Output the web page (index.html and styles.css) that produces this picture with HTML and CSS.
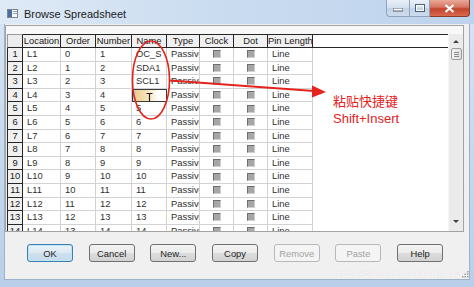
FILE: index.html
```html
<!DOCTYPE html>
<html lang="en">
<head>
  <meta charset="UTF-8">
  <meta name="viewport" content="width=device-width, initial-scale=1.0">
  <title>Browse Spreadsheet</title>
  <link rel="stylesheet" href="styles.css">
</head>
<body>
  <div class="window">
    <!-- TITLE BAR -->
    <div class="titlebar">
      <svg class="app-icon" width="11" height="9" viewBox="0 0 11 9">
        <rect x="0.5" y="0.5" width="10" height="8" fill="#f4f6f8" stroke="#7c8796"/>
        <rect x="1" y="1" width="4" height="7" fill="#4a6f9c"/>
        <rect x="6" y="2" width="4" height="1" fill="#9aa6b4"/>
        <rect x="6" y="4" width="4" height="1" fill="#9aa6b4"/>
      </svg>
      <span class="title">Browse Spreadsheet</span>
      <div class="controls">
        <span class="ctl min"><svg width="10" height="4"><rect x="0" y="0" width="10" height="3" fill="#fff" stroke="#4d5f77" stroke-width="1"/></svg></span>
        <span class="ctl max"><svg width="10" height="8"><rect x="0.5" y="0.5" width="9" height="7" fill="none" stroke="#4d5f77"/><rect x="1.5" y="1.5" width="7" height="5" fill="none" stroke="#fff"/></svg></span>
        <span class="ctl close"><svg width="11" height="9" viewBox="0 0 11 9"><path d="M1.5 1 L9.5 8 M9.5 1 L1.5 8" stroke="#fff" stroke-width="2.2"/></svg></span>
      </div>
    </div>

    <!-- CLIENT AREA -->
    <div class="client">
      <div class="sheet">
        <div class="sheet-strip"></div>
        <div class="sheet-body">
          <div class="grid" id="grid"></div>
          <div class="vscroll">
            <span class="arrow up"></span>
            <span class="thumb"><i></i><i></i><i></i></span>
            <span class="arrow down"></span>
          </div>
        </div>
      </div>

      <div class="buttons">
        <button class="btn default">OK</button>
        <button class="btn">Cancel</button>
        <button class="btn">New...</button>
        <button class="btn">Copy</button>
        <button class="btn" disabled>Remove</button>
        <button class="btn" disabled>Paste</button>
        <button class="btn">Help</button>
      </div>

      <div class="watermark">https://blog.csdn.net/weixin_43</div>
      <svg class="grip" width="9" height="9" viewBox="0 0 9 9">
        <g fill="#9a9a9a">
          <rect x="7" y="1" width="1.5" height="1.5"/>
          <rect x="4.5" y="3.5" width="1.5" height="1.5"/><rect x="7" y="3.5" width="1.5" height="1.5"/>
          <rect x="2" y="6" width="1.5" height="1.5"/><rect x="4.5" y="6" width="1.5" height="1.5"/><rect x="7" y="6" width="1.5" height="1.5"/>
        </g>
      </svg>
    </div>
  </div>

  <!-- red annotation drawn over the screenshot -->
  <svg class="annotation" width="474" height="287" viewBox="0 0 474 287">
    <ellipse cx="151" cy="80" rx="18.5" ry="39" fill="none" stroke="#e3231c" stroke-width="1.6"/>
    <path d="M170 80.5 L314 91" stroke="#e3231c" stroke-width="2.2"/>
    <polygon points="312,85.5 326,92 312,97.5" fill="#e3231c"/>
  </svg>
  <div class="note">粘贴快捷键<br>Shift+Insert</div>

  <script>
    // Build the spreadsheet rows
    const grid = document.getElementById("grid");
    const headers = ["", "Location", "Order", "Number", "Name", "Type", "Clock", "Dot", "Pin Length", ""];
    const names = ["OC_S", "SDA1", "SCL1", ""];

    function addCell(cls, text) {
      const div = document.createElement("div");
      div.className = cls;
      if (text !== undefined) div.textContent = text;
      grid.appendChild(div);
      return div;
    }

    headers.forEach((h, i) => {
      let cls = "hd";
      if (i === 0) cls += " corner";
      if (i === headers.length - 1) cls += " fill";
      addCell(cls, h);
    });

    for (let r = 1; r <= 14; r++) {
      addCell("rh", r);
      addCell("cell", "L" + r);
      addCell("cell", r - 1);
      addCell("cell", r);
      if (r === 4) {
        const edit = addCell("cell editing");
        edit.innerHTML = '<svg class="ibeam" width="7" height="12" viewBox="0 0 7 12"><path d="M0.5 0.5 H6.5 M3.5 0.5 V11.5 M0.5 11.5 H6.5" stroke="#222" stroke-width="1.2" fill="none"/></svg>';
      } else {
        addCell("cell", r <= 4 ? names[r - 1] : r);
      }
      addCell("cell", "Passive");
      addCell("cell check").innerHTML = "<span></span>";
      addCell("cell check").innerHTML = "<span></span>";
      addCell("cell", "Line");
      addCell("cell fill");
    }
  </script>
</body>
</html>
```

FILE: styles.css
```css
/* Stylesheet */
body {
  margin: 0;
  width: 474px;
  height: 287px;
  overflow: hidden;
  font-family: "Liberation Sans", Arial, sans-serif;
  position: relative;
}

.window {
  width: 474px;
  height: 287px;
  display: flex;
  flex-direction: column;
  background: linear-gradient(to bottom, #d7e6f5 0%, #c3d7ee 60%, #b9cfe9 100%);
}

/* ---------- title bar ---------- */
.titlebar {
  height: 24px;
  display: flex;
  align-items: center;
  padding: 3px 4px 0 7px;
  box-sizing: border-box;
  background: linear-gradient(to right, #dfeaf6 0%, #cadcf0 45%, #bed3ec 100%);
}

.app-icon {
  margin-right: 6px;
}

.title {
  font-size: 11px;
  color: #1b1b1b;
}

.controls {
  margin-left: auto;
  align-self: flex-start;
  margin-top: -3px;
  display: flex;
}

.ctl {
  height: 17px;
  display: flex;
  align-items: center;
  justify-content: center;
  box-sizing: border-box;
  border: 1px solid #8ea3bd;
  border-top: none;
  background: linear-gradient(to bottom, #e9f0f8 0%, #d3e0ee 50%, #c2d3e6 51%, #cddcec 100%);
}

.ctl.min {
  width: 24px;
  border-radius: 0 0 0 4px;
  align-items: flex-end;
  padding-bottom: 4px;
}

.ctl.max {
  width: 20px;
  border-left: none;
}

.ctl.close {
  width: 40px;
  border-left: none;
  border-color: #8c3a2e;
  border-radius: 0 0 4px 0;
  background: linear-gradient(to bottom, #e9a99b 0%, #d8735f 45%, #c4432c 55%, #d66b50 100%);
}

/* ---------- client area ---------- */
.client {
  position: relative;
  height: 255px;
  margin: 0 4px;
  background: #f0f0f0;
  border: 1px solid #9db2c8;
  border-top: none;
  display: flex;
  flex-direction: column;
}

.sheet {
  margin: 1px 5px 0 0;
  border: 1px solid #a3a3a3;
  background: #ececec;
}

.sheet-strip {
  height: 8px;
  background: #f8f8f8;
}

.sheet-body {
  height: 197px;
  display: flex;
  padding-left: 1px;
  overflow: hidden;
}

.grid {
  flex: 1;
  display: grid;
  grid-template-columns: 16px 38px 35px 36px 35px 33px 34px 34px 45px 1fr;
  grid-template-rows: 14px;
  grid-auto-rows: 13.6px;
  background: #fff;
  font-size: 9.4px;
  color: #303030;
  overflow: hidden;
}

.grid > div {
  box-sizing: border-box;
  overflow: hidden;
  white-space: nowrap;
}

.hd {
  background: #f0f0f0;
  color: #1a1a1a;
  text-align: center;
  line-height: 12px;
  border-top: 1px solid #262626;
  border-bottom: 1px solid #262626;
  border-right: 1px solid #262626;
}

.hd.corner {
  border-left: 1px solid #9a9a9a;
  border-top-color: #9a9a9a;
  background: #ececec;
}

.hd.fill {
  border-right: none;
  background: #fff;
}

.rh {
  background: #f0f0f0;
  color: #1a1a1a;
  text-align: center;
  line-height: 12.6px;
  border-left: 1px solid #262626;
  border-right: 1px solid #262626;
  border-bottom: 1px solid #262626;
}

.cell {
  padding-left: 4px;
  line-height: 12.6px;
  border-right: 1px solid #d2d2d2;
  border-bottom: 1px solid #d2d2d2;
}

.cell.fill {
  border: none;
}

.cell.check {
  display: flex;
  align-items: center;
  justify-content: center;
  padding-left: 0;
}

.cell.check span {
  width: 8px;
  height: 8px;
  box-sizing: border-box;
  border: 1px solid;
  border-color: #6e6e6e #cfcfcf #cfcfcf #6e6e6e;
  background: #a6a6a6;
}

.cell.editing {
  position: relative;
  outline: 1px solid #3a3a3a;
  outline-offset: -1px;
  background: linear-gradient(90deg, #c9cfd8 0, #c9cfd8 3px, #eecf8f 4px, #f6e4bb 45%, #ffffff 80%);
}

.ibeam {
  position: absolute;
  left: 14px;
  top: 4px;
}

/* ---------- vertical scrollbar ---------- */
.vscroll {
  width: 15px;
  background: #ebebeb;
  border-left: 1px solid #f6f6f6;
  display: flex;
  flex-direction: column;
  align-items: center;
  padding-top: 6px;
  box-sizing: border-box;
}

.arrow {
  width: 0;
  height: 0;
  border-left: 3px solid transparent;
  border-right: 3px solid transparent;
}

.arrow.up {
  border-bottom: 3px solid #404040;
}

.arrow.down {
  border-top: 3px solid #404040;
  margin-top: auto;
  margin-bottom: 8px;
}

.thumb {
  width: 11px;
  height: 12px;
  margin-top: 5px;
  box-sizing: border-box;
  border: 1px solid #9c9c9c;
  border-radius: 2px;
  background: linear-gradient(to right, #f4f4f4, #e0e0e0);
  display: flex;
  flex-direction: column;
  justify-content: center;
  align-items: center;
  gap: 1px;
}

.thumb i {
  width: 5px;
  height: 1px;
  background: #8a8a8a;
}

/* ---------- buttons ---------- */
.buttons {
  display: flex;
  gap: 15.7px;
  padding-left: 22px;
  margin-top: 12px;
}

.btn {
  width: 46px;
  height: 18px;
  padding: 0;
  font-family: "Liberation Sans", Arial, sans-serif;
  font-size: 9.4px;
  color: #1e1e1e;
  border: 1px solid #707070;
  border-radius: 3px;
  background: linear-gradient(to bottom, #f3f3f3 0%, #ebebeb 50%, #dddddd 51%, #d2d2d2 100%);
}

.btn.default {
  border-color: #3d7fb0;
  box-shadow: inset 0 0 0 1px #bfe4f6;
  background: linear-gradient(to bottom, #eaf3f9 0%, #dce9f3 50%, #cfe0ee 51%, #c6dbeb 100%);
}

.btn:disabled {
  color: #a2a2a2;
  border-color: #b5b9bc;
  background: #f4f4f4;
}

/* ---------- overlays ---------- */
.watermark {
  position: absolute;
  right: 9px;
  bottom: 0;
  font-size: 9px;
  color: #fbfbfb;
  text-shadow: 0 0 1px #cfcfcf;
}

.grip {
  position: absolute;
  right: 0;
  bottom: 0;
}

.annotation {
  position: absolute;
  left: 0;
  top: 0;
  pointer-events: none;
}

.note {
  position: absolute;
  left: 333px;
  top: 94px;
  font-family: "Liberation Sans", "Noto Sans CJK SC", sans-serif;
  font-size: 13px;
  line-height: 16.5px;
  color: #e3231c;
}
```
